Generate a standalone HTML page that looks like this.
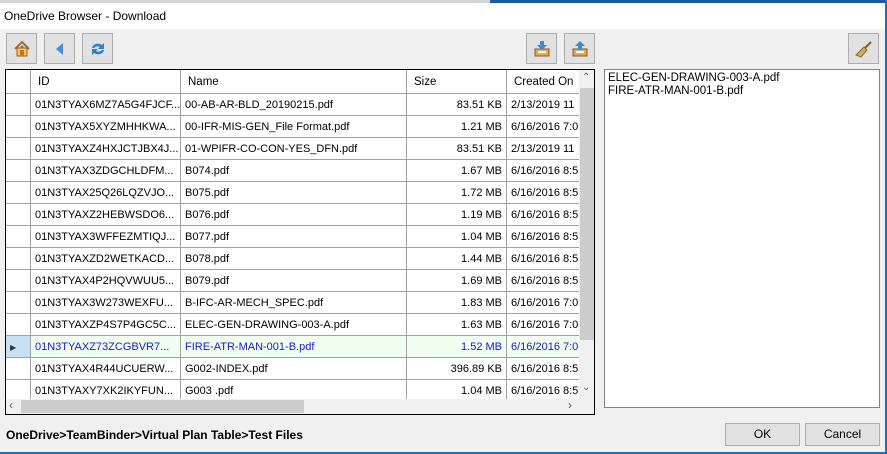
<!DOCTYPE html>
<html><head><style>
*{margin:0;padding:0;box-sizing:border-box}
body{width:887px;height:454px;overflow:hidden;background:#f0f0f0;font-family:"Liberation Sans",sans-serif;font-size:12px;color:#000;position:relative}
.a{position:absolute}
.btn{position:absolute;width:31px;height:31px;border:1px solid #adadad;background:#e1e1e1;display:flex;align-items:center;justify-content:center}
.c{position:absolute;height:22px;line-height:22px;border-right:1px solid #a0a0a0;border-bottom:1px solid #a0a0a0;white-space:nowrap;overflow:hidden;padding-left:4px;font-size:11px;background:#fff}
.r{text-align:right;padding-right:4px;padding-left:0}
.pb{position:absolute;width:75px;height:23px;border:1px solid #adadad;background:#e1e1e1;text-align:center;line-height:21px}
</style></head><body>
<div class="a" style="left:0;top:0;width:490px;height:3px;background:#d4d4d4"></div>
<div class="a" style="left:490px;top:0;width:397px;height:3px;background:#1c5aa0"></div>
<div class="a" style="left:0;top:3px;width:885px;height:26px;background:#fff"></div>
<div class="a" style="left:885px;top:0;width:2px;height:454px;background:#1c6fc4"></div>
<div class="a" style="left:4px;top:9px;font-size:12px">OneDrive Browser - Download</div>

<div class="btn" style="left:6px;top:33px"><svg width="18" height="18" viewBox="0 0 18 18"><path d="M2 9L9 2L16 9" fill="none" stroke="#b5651d" stroke-width="2"/><rect x="4" y="8" width="10" height="8" fill="#f3c56b" stroke="#a0601a"/><rect x="7" y="10" width="4" height="6" fill="#c8761c"/><circle cx="9" cy="7" r="1.5" fill="#3a7fd0"/></svg></div>
<div class="btn" style="left:44px;top:33px"><svg width="18" height="18"><path d="M12 3L5 9L12 15Z" fill="#3f8fd8"/></svg></div>
<div class="btn" style="left:82px;top:33px"><svg width="18" height="18"><path d="M3 8a6 5 0 0 1 10-3l2-2v6h-6l2-2a4 3 0 0 0-6 1z" fill="#2a7fd0"/><path d="M15 10a6 5 0 0 1-10 3l-2 2v-6h6l-2 2a4 3 0 0 0 6-1z" fill="#2a7fd0"/></svg></div>
<div class="btn" style="left:526px;top:33px"><svg width="20" height="18"><rect x="3" y="9" width="14" height="7" fill="#e0a860" stroke="#8a5a20"/><rect x="6" y="11" width="8" height="2" fill="#fff"/><path d="M8 1h4v4h3l-5 5l-5-5h3z" fill="#3a8ad8"/></svg></div>
<div class="btn" style="left:564px;top:33px"><svg width="20" height="18"><rect x="3" y="9" width="14" height="7" fill="#e0a860" stroke="#8a5a20"/><rect x="6" y="11" width="8" height="2" fill="#fff"/><path d="M10 1l5 5h-3v3h-4v-3h-3z" fill="#3a8ad8"/></svg></div>
<div class="btn" style="left:848px;top:33px"><svg width="20" height="18"><path d="M17 2L10 9" stroke="#8a5a20" stroke-width="2"/><path d="M10 7l3 3l-6 7l-5-2z" fill="#d9a860" stroke="#8a6a30"/></svg></div>

<div class="a" style="left:5px;top:69px;width:590px;height:346px;border:1px solid #000;background:#f0f0f0;overflow:hidden">
<div class="a" style="left:0;top:0;width:573px;height:329px;background:#fff"></div>
<div class="c" style="left:0;top:0;width:25px;height:24px;line-height:24px"></div>
<div class="c" style="left:25px;top:0;width:150px;height:24px;line-height:24px;padding-left:7px;font-size:11.5px">ID</div>
<div class="c" style="left:175px;top:0;width:226px;height:24px;line-height:24px;padding-left:7px;font-size:11.5px">Name</div>
<div class="c" style="left:401px;top:0;width:100px;height:24px;line-height:24px;padding-left:7px;font-size:11.5px">Size</div>
<div class="c" style="left:501px;top:0;width:80px;height:24px;line-height:24px;padding-left:7px;border-right:none;font-size:11.5px">Created On</div>
<div id="rows"></div>
<div class="a" style="left:573px;top:0;width:16px;height:329px;background:#f0f0f0"></div>
<div class="a" style="left:574px;top:18px;width:15px;height:252px;background:#cdcdcd"></div>
<div class="a" style="left:576px;top:2px;font-size:10px;color:#606060">&#8963;</div>
<div class="a" style="left:576px;top:312px;font-size:10px;color:#606060">&#8964;</div>
<div class="a" style="left:0;top:329px;width:588px;height:15px;background:#f0f0f0"></div>
<div class="a" style="left:15px;top:330px;width:283px;height:13px;background:#cdcdcd"></div>
<div class="a" style="left:3px;top:328px;font-size:12px;color:#606060">&#8249;</div>
<div class="a" style="left:562px;top:328px;font-size:12px;color:#606060">&#8250;</div>
</div>

<div class="a" style="left:604px;top:69px;width:276px;height:339px;border:1px solid #828282;background:#fff;padding:2px 0 0 3px;font-size:11.5px;line-height:13px">ELEC-GEN-DRAWING-003-A.pdf<br>FIRE-ATR-MAN-001-B.pdf</div>

<div class="a" style="left:6px;top:428px;font-weight:bold;font-size:12px">OneDrive&gt;TeamBinder&gt;Virtual Plan Table&gt;Test Files</div>
<div class="pb" style="left:725px;top:423px">OK</div>
<div class="pb" style="left:805px;top:423px">Cancel</div>
<div class="a" style="left:0;top:452px;width:887px;height:2px;background:#1c6fc4"></div>

<script>
var d=[["01N3TYAX6MZ7A5G4FJCF...","00-AB-AR-BLD_20190215.pdf","83.51 KB","2/13/2019 11"],
["01N3TYAX5XYZMHHKWA...","00-IFR-MIS-GEN_File Format.pdf","1.21 MB","6/16/2016 7:0"],
["01N3TYAXZ4HXJCTJBX4J...","01-WPIFR-CO-CON-YES_DFN.pdf","83.51 KB","2/13/2019 11"],
["01N3TYAX3ZDGCHLDFM...","B074.pdf","1.67 MB","6/16/2016 8:5"],
["01N3TYAX25Q26LQZVJO...","B075.pdf","1.72 MB","6/16/2016 8:5"],
["01N3TYAXZ2HEBWSDO6...","B076.pdf","1.19 MB","6/16/2016 8:5"],
["01N3TYAX3WFFEZMTIQJ...","B077.pdf","1.04 MB","6/16/2016 8:5"],
["01N3TYAXZD2WETKACD...","B078.pdf","1.44 MB","6/16/2016 8:5"],
["01N3TYAX4P2HQVWUU5...","B079.pdf","1.69 MB","6/16/2016 8:5"],
["01N3TYAX3W273WEXFU...","B-IFC-AR-MECH_SPEC.pdf","1.83 MB","6/16/2016 7:0"],
["01N3TYAXZP4S7P4GC5C...","ELEC-GEN-DRAWING-003-A.pdf","1.63 MB","6/16/2016 7:0"],
["01N3TYAXZ73ZCGBVR7...","FIRE-ATR-MAN-001-B.pdf","1.52 MB","6/16/2016 7:0"],
["01N3TYAX4R44UCUERW...","G002-INDEX.pdf","396.89 KB","6/16/2016 8:5"],
["01N3TYAXY7XK2IKYFUN...","G003 .pdf","1.04 MB","6/16/2016 8:5"]];
var h="";
d.forEach(function(r,i){var t=24+22*i,s=i==11,bg=s?"#f0fff0":"#fff",col=s?"#1a1ad0":"#000";
h+='<div class="c" style="left:0;top:'+t+'px;width:25px;background:'+(s?"#c8e0f4":"#fff")+'">'+(s?'<span style="font-size:8px;color:#333">&#9654;</span>':'')+'</div>';
h+='<div class="c" style="left:25px;top:'+t+'px;width:150px;background:'+bg+';color:'+col+'">'+r[0]+'</div>';
h+='<div class="c" style="left:175px;top:'+t+'px;width:226px;background:'+bg+';color:'+col+'">'+r[1]+'</div>';
h+='<div class="c r" style="left:401px;top:'+t+'px;width:100px;background:'+bg+';color:'+col+'">'+r[2]+'</div>';
h+='<div class="c" style="left:501px;top:'+t+'px;width:80px;border-right:none;background:'+bg+';color:'+col+'">'+r[3]+'</div>';});
document.getElementById("rows").innerHTML=h;
</script>
</body></html>
